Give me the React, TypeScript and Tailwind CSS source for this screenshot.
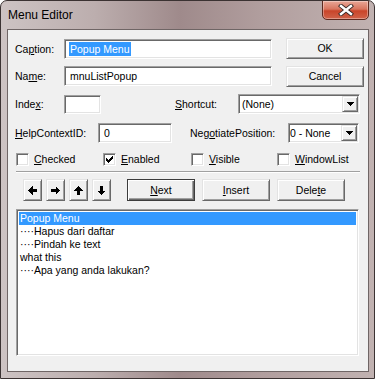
import React from "react";

const sunken =
  "bg-white border border-t-[#a0a0a0] border-l-[#a0a0a0] border-r-white border-b-white shadow-[inset_1px_1px_0_#696969,inset_-1px_-1px_0_#e3e3e3]";
const raised =
  "bg-[#f0f0f0] border border-t-[#e3e3e3] border-l-[#e3e3e3] border-r-[#696969] border-b-[#696969] shadow-[inset_1px_1px_0_#ffffff,inset_-1px_-1px_0_#a0a0a0]";
const raisedDefault =
  "bg-[#f0f0f0] border border-[#3c3c3c] shadow-[inset_1px_1px_0_#ffffff,inset_-1px_-1px_0_#696969,inset_-2px_-2px_0_#a0a0a0]";

function U({ children }: { children: React.ReactNode }) {
  return <span className="underline underline-offset-[1px] decoration-[1px]">{children}</span>;
}

function Btn({ w, def, children }: { w: string; def?: boolean; children: React.ReactNode }) {
  return (
    <div className={`${w} h-[22px] flex items-center justify-center ${def ? raisedDefault : raised}`}>
      {children}
    </div>
  );
}

function Arrow({ dir }: { dir: "l" | "r" | "u" | "d" }) {
  const rot = { l: 0, r: 180, u: 90, d: 270 }[dir];
  return (
    <div className={`w-[19px] h-[22px] flex items-center justify-center ${raised}`}>
      <svg width="9" height="9" viewBox="0 0 9 9" shapeRendering="crispEdges">
        <g transform={`rotate(${rot} 4.5 4.5)`}>
          <polygon points="0,4.5 4.5,0 4.5,3 9,3 9,6 4.5,6 4.5,9" fill="#000" />
        </g>
      </svg>
    </div>
  );
}

function Combo({ w, text, pad }: { w: string; text: string; pad: string }) {
  return (
    <div className={`${w} h-[20px] flex items-center ${sunken}`}>
      <span className={`flex-1 ${pad} leading-none`}>{text}</span>
      <div className={`w-[16px] h-[16px] mr-[1px] flex items-center justify-center ${raised}`}>
        <svg width="7" height="4" viewBox="0 0 7 4" shapeRendering="crispEdges">
          <polygon points="0,0 7,0 3.5,4" fill="#000" />
        </svg>
      </div>
    </div>
  );
}

function Check({ checked, children, w }: { checked?: boolean; children: React.ReactNode; w: string }) {
  return (
    <div className={`${w} flex items-center`}>
      <div className={`w-[13px] h-[13px] flex items-center justify-center ${sunken}`}>
        {checked && (
          <svg width="7" height="7" viewBox="0 0 7 7" shapeRendering="crispEdges">
            <path d="M0 2h1v1h1v1h1v-1h1v-1h1v-1h1v-1h1v3h-1v1h-1v1h-1v1h-1v1h-1v-1h-1v-1h-1v-1h-1z" fill="#000" />
          </svg>
        )}
      </div>
      <span className="ml-[5px]">{children}</span>
    </div>
  );
}

export default function App() {
  return (
    <div
      className="w-[375px] h-[379px] flex flex-col border border-[#3b3232] rounded-t-[7px] overflow-hidden bg-[linear-gradient(90deg,#cdc3c3_0%,#bcaeae_25%,#9f8a8b_48%,#b19e9e_70%,#c1b2b1_100%)] text-black"
      style={{ fontFamily: '"Liberation Sans", Arial, sans-serif' }}
    >
      {/* Title bar */}
      <div className="h-[28px] flex items-start justify-between">
        <span className="ml-[7px] mt-[7px] text-[12px] leading-[14px] text-black">Menu Editor</span>
        <div className="mt-[-1px] mr-[5px] w-[47px] h-[20px] rounded-b-[5px] border border-[#5e2a20] bg-[linear-gradient(180deg,#e9a797_0%,#d8755f_45%,#c9452a_55%,#d0634a_100%)] shadow-[inset_0_0_0_1px_rgba(255,255,255,0.35)] flex items-center justify-center">
          <svg width="16" height="12" viewBox="0 0 16 12">
            <path d="M3 2 L13 10 M13 2 L3 10" stroke="#3a2a28" strokeWidth="4.2" strokeLinecap="square" />
            <path d="M3 2 L13 10 M13 2 L3 10" stroke="#ffffff" strokeWidth="2.4" strokeLinecap="square" />
          </svg>
        </div>
      </div>

      {/* Client area */}
      <div className="ml-[6px] mr-[5px] h-[343px] border border-[#6f6565] bg-[#f0f0f0] text-[10.5px] leading-[13px]">
        <div className="pl-[7px] pt-[8px] flex flex-col">
          {/* Caption */}
          <div className="flex items-start h-[21px]">
            <span className="w-[49px] mt-[5px]">
              Ca<U>p</U>tion:
            </span>
            <div className={`w-[208px] h-[20px] mt-[1px] flex items-center pl-[4px] ${sunken}`}>
              <span className="bg-[#3399ff] text-white px-[1px] leading-[14px]">Popup Menu</span>
            </div>
            <div className="ml-[14px]">
              <div className={`w-[78px] h-[21px] flex items-center justify-center ${raised}`}>OK</div>
            </div>
          </div>
          {/* Name */}
          <div className="flex items-start h-[21px] mt-[7px]">
            <span className="w-[49px] mt-[4px]">
              Na<U>m</U>e:
            </span>
            <div className={`w-[208px] h-[20px] flex items-center pl-[5px] ${sunken}`}>mnuListPopup</div>
            <div className="ml-[14px]">
              <div className={`w-[78px] h-[21px] flex items-center justify-center ${raised}`}>Cancel</div>
            </div>
          </div>
          {/* Index / Shortcut */}
          <div className="flex items-center h-[20px] mt-[7px]">
            <span className="w-[49px]">
              Inde<U>x</U>:
            </span>
            <div className={`w-[37px] h-[19px] ${sunken}`} />
            <span className="ml-[74px] w-[63px]">
              <U>S</U>hortcut:
            </span>
            <Combo w="w-[122px]" text="(None)" pad="pl-[3px]" />
          </div>
          {/* HelpContextID / NegotiatePosition */}
          <div className="flex items-center h-[20px] mt-[9px]">
            <span className="w-[83px]">
              <U>H</U>elpContextID:
            </span>
            <div className={`w-[74px] h-[20px] flex items-center pl-[5px] ${sunken}`}>0</div>
            <span className="ml-[18px] w-[98px]">
              Neg<U>o</U>tiatePosition:
            </span>
            <Combo w="w-[71px]" text="0 - None" pad="pl-[1px]" />
          </div>
          {/* Checkboxes */}
          <div className="flex items-center h-[13px] mt-[10px] pl-[1px]">
            <Check w="w-[87px]">
              <U>C</U>hecked
            </Check>
            <Check w="w-[88px]" checked>
              <U>E</U>nabled
            </Check>
            <Check w="w-[86px]">
              <U>V</U>isible
            </Check>
            <Check w="w-[80px]">
              <U>W</U>indowList
            </Check>
          </div>
          {/* Separator */}
          <div className="ml-[1px] w-[344px] mt-[5px] h-[2px] border-t border-t-[#a0a0a0] border-b border-b-white" />
          {/* Buttons */}
          <div className="flex items-center h-[22px] mt-[6px] pl-[8px]">
            <div className="flex gap-[4px]">
              <Arrow dir="l" />
              <Arrow dir="r" />
              <Arrow dir="u" />
              <Arrow dir="d" />
            </div>
            <div className="ml-[16px] flex gap-[7px]">
              <Btn w="w-[68px]" def>
                <U>N</U>ext
              </Btn>
              <Btn w="w-[68px]">
                <U>I</U>nsert
              </Btn>
              <Btn w="w-[68px]">
                Dele<U>t</U>e
              </Btn>
            </div>
          </div>
          {/* List */}
          <div className={`ml-[1px] mt-[8px] w-[343px] h-[147px] ${sunken} p-[2px]`}>
            <div className="h-[13px] bg-[#3399ff] text-white pl-[1px] leading-[13px]">Popup Menu</div>
            <div className="h-[13px] pl-[1px] leading-[13px]">····Hapus dari daftar</div>
            <div className="h-[13px] pl-[1px] leading-[13px]">····Pindah ke text</div>
            <div className="h-[13px] pl-[1px] leading-[13px]">what this</div>
            <div className="h-[13px] pl-[1px] leading-[13px]">····Apa yang anda lakukan?</div>
          </div>
        </div>
      </div>
    </div>
  );
}
